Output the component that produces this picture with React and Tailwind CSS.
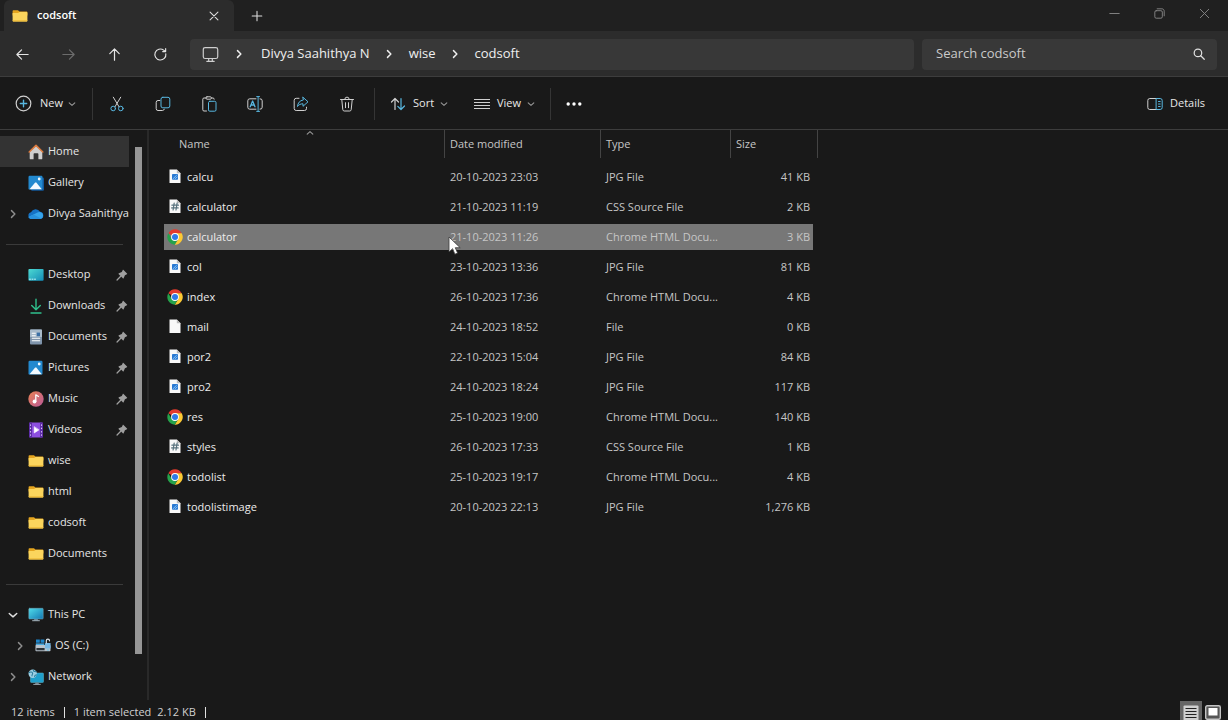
import React from "react";

const BLUE = "#58b7e0";
const GREY = "#d0d0d0";

function Svg({ size = 16, children, className = "", box = "0 0 16 16" }) {
  return (
    <svg
      width={size}
      height={size}
      viewBox={box}
      fill="none"
      stroke="currentColor"
      strokeLinecap="round"
      strokeLinejoin="round"
      aria-hidden="true"
      className={`shrink-0 ${className}`}
    >
      {children}
    </svg>
  );
}

/* ---------- file and folder icons ---------- */

function FolderIcon() {
  return (
    <Svg>
      <path d="M.6 3.2c0-.6.4-1 1-1h3.700c.4 0 .7.1 1 .4l1 1H14.400c.6 0 1 .4 1 1v3H.6z" fill="#e5a51f" stroke="none" />
      <path d="M.6 5h5.200c.5 0 .8-.2 1.100-.5l.6-.6h6.900c.6 0 1 .4 1 1v7.600c0 .6-.4 1-1 1H1.600c-.6 0-1-.4-1-1z" fill="#fbd55d" stroke="none" />
      <path d="M.6 12.200v.3c0 .6.4 1 1 1h12.800c.6 0 1-.4 1-1v-.3z" fill="#eebb3a" stroke="none" />
    </Svg>
  );
}

function HomeIcon() {
  return (
    <Svg>
      <path d="M1.700 7.500 8 1.600l6.300 5.900v6.900c0 .5-.4.900-.9.900h-3V10c0-.5-.3-.8-.8-.8H6.400c-.5 0-.8.3-.8.8v5.300h-3c-.5 0-.9-.4-.9-.9z" fill="#cfcfcf" stroke="none" />
      <path d="M1.200 8 8 1.400 14.800 8" stroke="#dc7a3e" strokeWidth="1.600" />
    </Svg>
  );
}

function PictureIcon({ gallery = false }) {
  return (
    <Svg>
      {gallery && <rect x="3" y="2.500" width="13" height="13.200" rx="1.200" fill="#12589b" stroke="none" />}
      <rect x=".5" y=".8" width="14" height="13.800" rx="1.200" fill="#2389cf" stroke="none" />
      <path d="M1.500 14.200 7.200 7.600c.3-.3.8-.3 1.100 0l5.500 6.600z" fill="#f3faff" stroke="none" />
      <circle cx="11.200" cy="4" r="1.400" fill="#f3faff" stroke="none" />
    </Svg>
  );
}

function CloudIcon() {
  return (
    <Svg>
      <path d="M3.600 13A3.400 3.400 0 0 1 3 6.300 5 5 0 0 1 12 5.700 3.700 3.700 0 0 1 12.400 13z" fill="#1672c4" stroke="none" />
      <path d="M3.600 13c-1.500 0-2.600-.8-3.100-1.900L9 6.800c1-.6 2.200-.9 3.500-.6A3.500 3.500 0 0 1 12.400 13z" fill="#36a4ea" stroke="none" />
      <path d="m5.600 8.400 7.900 4.400c-.4.200-.7.200-1.100.2H3.600c-1.500 0-2.600-.8-3.100-1.900z" fill="#2890dc" stroke="none" />
    </Svg>
  );
}

function DesktopIcon() {
  return (
    <Svg>
      <defs>
        <linearGradient id="desk" x1="0" y1="0" x2="1" y2="1">
          <stop offset="0" stopColor="#4ddad2" />
          <stop offset="1" stopColor="#138bb7" />
        </linearGradient>
      </defs>
      <rect x=".4" y="2" width="15.200" height="11.800" rx="1" fill="url(#desk)" stroke="none" />
      <path d="M1.500 12.200h1M4 12.200h1M6.500 12.200h1" stroke="#d7ffff" strokeWidth=".9" />
    </Svg>
  );
}

function DownloadIcon() {
  return (
    <Svg className="text-[#2fc08d]">
      <path d="M8 1.200v10.300M3.700 7.500 8 11.700l4.300-4.200M3 15h10" strokeWidth="1.400" />
    </Svg>
  );
}

function DocumentIcon() {
  return (
    <Svg>
      <rect x="2" y=".6" width="12" height="15" rx="1" fill="#7f94ab" stroke="none" />
      <path d="M2 1.600c0-.6.4-1 1-1h10c.6 0 1 .4 1 1V8H2z" fill="#a9bbcb" stroke="none" />
      <path d="M4.300 4.200h3M4.300 6.700h3M4.300 9.200h7.400M4.300 11.700h7.400" stroke="#fff" strokeWidth="1.100" />
      <rect x="8.800" y="3.600" width="3.200" height="3.600" fill="#3b6fa5" stroke="none" />
    </Svg>
  );
}

function MusicIcon() {
  return (
    <Svg>
      <defs>
        <linearGradient id="mus" x1="0" y1="0" x2="1" y2="1">
          <stop offset="0" stopColor="#ea8152" />
          <stop offset="1" stopColor="#b95a99" />
        </linearGradient>
      </defs>
      <circle cx="8" cy="8" r="7.700" fill="url(#mus)" stroke="none" />
      <circle cx="6.500" cy="10.500" r="1.900" fill="#fff" stroke="none" />
      <path d="M7.800 10.500V3.800l2.700 1.700" stroke="#fff" strokeWidth="1.300" />
    </Svg>
  );
}

function VideoIcon() {
  return (
    <Svg>
      <rect x="1" y=".5" width="14" height="15" rx="1.300" fill="#8d4fe0" stroke="none" />
      <path d="M1 1.800C1 1 1.600.5 2.300.5H4v15H2.300C1.600 15.500 1 15 1 14.200zM12 .5h1.700c.8 0 1.300.5 1.300 1.300v12.400c0 .8-.5 1.300-1.300 1.300H12z" fill="#5c2ba5" stroke="none" />
      <path d="M2.500 2.900v.4M2.500 6.200v.4M2.500 9.500v.4M2.500 12.800v.4M13.500 2.900v.4M13.500 6.200v.4M13.500 9.500v.4M13.500 12.800v.4" stroke="#d9c3fa" strokeWidth="1.200" />
      <path d="M6.200 5v6l4.600-3z" fill="#fff" stroke="#fff" strokeWidth=".6" />
    </Svg>
  );
}

function MonitorIcon() {
  return (
    <Svg>
      <defs>
        <linearGradient id="mon" x1="0" y1="0" x2="1" y2="1">
          <stop offset="0" stopColor="#4fdcea" />
          <stop offset="1" stopColor="#1478b2" />
        </linearGradient>
      </defs>
      <path d="M6.500 11h3l.6 2.500H5.900z" fill="#6d8391" stroke="none" />
      <rect x=".8" y="1.300" width="14.400" height="10.700" rx=".8" fill="url(#mon)" stroke="#75a9bd" strokeWidth=".5" />
      <path d="M4.600 13.700h6.800" stroke="#a6b4bd" strokeWidth="1" />
    </Svg>
  );
}

function DriveIcon() {
  return (
    <Svg>
      <path d="M1 1.500h3.800v3.300H1zM5.600 1.500h3.800v3.300H5.600z" fill="#1d84c9" stroke="none" />
      <path d="M.8 5.400h8.600v2H.8z" fill="#4aa9df" stroke="none" />
      <rect x=".5" y="7" width="15" height="6.300" rx=".7" fill="#b9c3cc" stroke="none" />
      <rect x="1.400" y="10" width="8.200" height="2.300" fill="#2b3238" stroke="none" />
      <rect x="10" y="5" width="5.600" height="5.600" rx=".6" fill="#78b8e4" stroke="none" />
      <path d="M11.300 5V2.800c0-2.200 3.200-2.200 3.200 0" stroke="#dfe6eb" strokeWidth="1.200" />
      <circle cx="13" cy="12" r=".7" fill="#40c8f2" stroke="none" />
    </Svg>
  );
}

function NetworkIcon() {
  return (
    <Svg>
      <rect x="2.500" y="4" width="13" height="9.500" rx=".8" fill="#20a0cc" stroke="#5eb9d1" strokeWidth=".5" />
      <path d="M7.500 13.500h3l.5 1.700H7z" fill="#71858f" stroke="none" />
      <path d="M5.700 15.400h6.600" stroke="#a6b4bd" strokeWidth=".9" />
      <circle cx="4.700" cy="4.700" r="4.200" fill="#9ed0e4" stroke="none" />
      <path d="M1.200 3.400c1.600-.8 3-.4 3.400.8.300 1-1 1.500-.6 2.700M5.400 1c-.2 1.400 1 1.600 2.700 1.700M6.600 7.500c0-1 .6-1.500 1.800-1.600" stroke="#2d7f9f" strokeWidth="1.100" />
    </Svg>
  );
}

function PinIcon() {
  return (
    <Svg size={12} className="text-[#9f9f9f]">
      <path d="M10 1.300 14.700 6c.4.400.3.900-.2 1.100l-2.600 1.200-1.700 3.900c-.2.500-.8.600-1.100.2L3.600 6.900c-.4-.4-.3-.9.200-1.100l3.900-1.700L8.900 1.500c.2-.5.700-.6 1.100-.2z" fill="currentColor" stroke="none" />
      <path d="M6 10 1.400 14.600" strokeWidth="1.700" />
    </Svg>
  );
}

function PageShape() {
  return (
    <>
      <path d="M2.500.500h7.300L13.500 4.200V14h-11z" fill="#f8f8f8" stroke="none" />
      <path d="M9.800.500v3.700h3.700z" fill="#b9b9b9" stroke="none" />
    </>
  );
}

function JpgIcon() {
  return (
    <Svg>
      <PageShape />
      <rect x="5" y="5" width="6" height="5.800" rx=".8" fill="#2a79d2" stroke="none" />
      <path d="m6 9.800 3.500-3.400M8.200 9.600l2-1.600" stroke="#8bc8fa" strokeWidth=".9" />
    </Svg>
  );
}

function CssIcon() {
  return (
    <Svg>
      <PageShape />
      <path d="m7.200 4-1.100 7M10.100 4 9 11M4.900 6.200h6.600M4.600 8.900h6.600" stroke="#58727d" strokeWidth="1.200" />
    </Svg>
  );
}

function BlankIcon() {
  return (
    <Svg>
      <PageShape />
    </Svg>
  );
}

function ChromeIcon() {
  return (
    <Svg>
      <path d="M8 8 1.330 4.150A7.700 7.700 0 0 1 14.670 4.150L14.670 4.400H8z" fill="#e33b2e" stroke="none" />
      <path d="M8 4.200h6.700A7.700 7.700 0 0 1 7.700 15.700L11.300 9.900z" fill="#fcc934" stroke="none" />
      <path d="M1.330 4.150A7.700 7.700 0 0 0 7.700 15.700l3.500-5.900-6.400.2z" fill="#25a24b" stroke="none" />
      <circle cx="8" cy="8" r="3.900" fill="#fff" stroke="none" />
      <circle cx="8" cy="8" r="3" fill="#2f7be8" stroke="none" />
    </Svg>
  );
}

function Chevron({ dir = "right", className = "" }) {
  const paths = {
    right: "M6 3.500 10.500 8 6 12.500",
    down: "M3 6l5 4.500L13 6",
    up: "M3 10l5-4.500 5 4.500",
  };
  return (
    <Svg size={12} className={className}>
      <path d={paths[dir]} strokeWidth="1.900" />
    </Svg>
  );
}

/* ---------- title bar ---------- */

function TitleBar() {
  return (
    <header className="flex h-[31px] shrink-0 items-stretch bg-[#202020] pl-1">
      <div className="flex w-[230px] items-center rounded-t-md bg-[#2c2c2c] pl-2">
        <FolderIcon />
        <span className="ml-[9px] flex-1 text-[11px] font-semibold text-white">codsoft</span>
        <button type="button" aria-label="Close tab" className="mr-[13px] text-[#dedede]">
          <Svg size={14}>
            <path d="m3.500 3.500 9 9M12.500 3.500l-9 9" strokeWidth="1.200" />
          </Svg>
        </button>
      </div>
      <button type="button" aria-label="New tab" className="ml-[16px] text-[#dedede]">
        <Svg size={14}>
          <path d="M8 2.500v11M2.500 8h11" strokeWidth="1.200" />
        </Svg>
      </button>
      <div className="ml-auto flex items-center gap-[30px] pr-4 pb-1 text-[#858585]">
        <button type="button" aria-label="Minimise">
          <Svg size={15}>
            <path d="M3 8h10" />
          </Svg>
        </button>
        <button type="button" aria-label="Restore">
          <Svg size={15}>
            <rect x="3" y="5" width="8" height="8" rx="1.500" />
            <path d="M5.500 3h5C12 3 13 4 13 5.500v5" />
          </Svg>
        </button>
        <button type="button" aria-label="Close window">
          <Svg size={15}>
            <path d="m3.500 3.500 9 9M12.500 3.500l-9 9" />
          </Svg>
        </button>
      </div>
    </header>
  );
}

/* ---------- navigation bar ---------- */

function NavBar() {
  return (
    <div className="flex h-[46px] shrink-0 items-center border-b border-[#3d3d3d] bg-[#2c2c2c] pt-px pr-[11px] pl-[15px]">
      <div className="flex w-[175px] shrink-0 gap-[31px] text-[#e4e4e4]">
        <button type="button" aria-label="Back">
          <Svg size={15}>
            <path d="M14 8H2M7 3 2 8l5 5" strokeWidth="1.300" />
          </Svg>
        </button>
        <button type="button" aria-label="Forward" className="text-[#6c6c6c]">
          <Svg size={15}>
            <path d="M2 8h12M9 3l5 5-5 5" strokeWidth="1.300" />
          </Svg>
        </button>
        <button type="button" aria-label="Up">
          <Svg size={15}>
            <path d="M8 14V2M3 7l5-5 5 5" strokeWidth="1.300" />
          </Svg>
        </button>
        <button type="button" aria-label="Refresh">
          <Svg size={15}>
            <path d="M13.700 7.200A5.900 5.900 0 1 1 11.400 3.300l1.800 1.500M13.500 1.700v3.200h-3.200" strokeWidth="1.200" />
          </Svg>
        </button>
      </div>
      <nav aria-label="Address" className="flex h-[31px] flex-1 items-center rounded bg-[#383838] pl-[12px] text-[13px] text-[#efefef]">
        <Svg size={17} className="text-[#cfcfcf]">
          <rect x="1.200" y="1.500" width="13.600" height="10.300" rx="1.800" strokeWidth="1.100" />
          <path d="M6.300 12v2.300M9.700 12v2.300M4.500 14.400h7" strokeWidth="1.100" />
        </Svg>
        <Chevron className="ml-[14px]" />
        <button type="button" className="ml-[16px]">Divya Saahithya N</button>
        <Chevron className="ml-[13px]" />
        <button type="button" className="ml-[14px]">wise</button>
        <Chevron className="ml-[13px]" />
        <button type="button" className="ml-[14px]">codsoft</button>
      </nav>
      <div className="ml-[8px] flex h-[31px] w-[295px] items-center rounded bg-[#383838] pr-[11px] pl-[14px]">
        <input
          type="text"
          aria-label="Search codsoft"
          placeholder="Search codsoft"
          className="min-w-0 flex-1 bg-transparent text-[13px] text-white outline-none placeholder:text-[#cacaca]"
        />
        <Svg size={14} className="text-[#e0e0e0]">
          <circle cx="6.800" cy="6.800" r="4.300" strokeWidth="1.400" />
          <path d="m10 10 4 4" strokeWidth="1.400" />
        </Svg>
      </div>
    </div>
  );
}

/* ---------- command bar ---------- */

function Divider() {
  return <span className="h-[32px] w-px shrink-0 bg-[#353535]" />;
}

const COMMANDS = [
  {
    label: "Cut",
    icon: (
      <>
        <path d="M4.300 1.200 10 10.700M11.700 1.200 6 10.700" stroke={GREY} />
        <circle cx="4.200" cy="12.500" r="2.300" stroke={BLUE} />
        <circle cx="11.800" cy="12.500" r="2.300" stroke={BLUE} />
      </>
    ),
  },
  {
    label: "Copy",
    icon: (
      <>
        <path d="M4.800 4.500H3A1.800 1.800 0 0 0 1.200 6.300v6.400A1.800 1.800 0 0 0 3 14.500h4.600a1.800 1.800 0 0 0 1.700-1.300" stroke={GREY} />
        <rect x="6" y="1.300" width="8.800" height="10.500" rx="1.800" stroke={BLUE} />
      </>
    ),
  },
  {
    label: "Paste",
    icon: (
      <>
        <path d="M5 2H3a1.200 1.200 0 0 0-1.200 1.200v10.600A1.200 1.200 0 0 0 3 15h2.500M10.500 2H12a1.200 1.200 0 0 1 1.200 1.200" stroke={GREY} />
        <rect x="5" y=".8" width="5.300" height="2.400" rx="1" stroke={GREY} />
        <rect x="7.500" y="5.300" width="7.500" height="9.900" rx="1.300" stroke={BLUE} />
      </>
    ),
  },
  {
    label: "Rename",
    icon: (
      <>
        <path d="M9 2.800H2.800A2 2 0 0 0 .8 4.800v6.400a2 2 0 0 0 2 2H9M13 2.800a2 2 0 0 1 2.200 2v6.400a2 2 0 0 1-2.200 2" stroke={GREY} />
        <path d="M11.100.8v14.400M9.700.6h2.800M9.700 15.400h2.800" stroke={BLUE} />
        <path d="M3.200 10.800 5.600 5l2.400 5.800M4.100 9h3" stroke={BLUE} strokeWidth="1.300" />
      </>
    ),
  },
  {
    label: "Share",
    icon: (
      <>
        <path d="M6 2.300H3.200a2 2 0 0 0-2 2v8.200a2 2 0 0 0 2 2h8.300a2 2 0 0 0 2-2v-1.300" stroke={GREY} />
        <path d="M10 1.300 15 5.800l-5 4.500V7.800c-2.400 0-4.200.8-5.500 2.700.3-3.500 2.200-6 5.500-6.500z" stroke={BLUE} />
      </>
    ),
  },
  {
    label: "Delete",
    icon: (
      <>
        <path d="M1.500 3.500h13M5.800 3.300a2.200 2.200 0 0 1 4.400 0M2.800 3.700l1 10c.1.800.7 1.300 1.400 1.300h5.600c.7 0 1.300-.5 1.400-1.300l1-10M6.500 6.700v5M9.500 6.700v5" stroke={GREY} />
      </>
    ),
  },
];

function CommandBar() {
  return (
    <div className="flex h-[53px] shrink-0 items-center border-b border-[#3d3d3d] bg-[#191919] pt-px pr-[23px] pl-[15px] text-[11px] font-medium text-[#e8e8e8]">
      <button type="button" className="flex w-[77px] items-center">
        <Svg size={17}>
          <circle cx="8" cy="8" r="6.900" stroke={GREY} strokeWidth="1.100" />
          <path d="M8 5v6M5 8h6" stroke={BLUE} strokeWidth="1.300" />
        </Svg>
        <span className="ml-[8px]">New</span>
        <Chevron dir="down" className="ml-[3px] scale-75 text-[#999]" />
      </button>
      <Divider />
      <div className="flex w-[281px] gap-[30px] pl-[16px]">
        {COMMANDS.map((c) => (
          <button key={c.label} type="button" aria-label={c.label}>
            <Svg>{c.icon}</Svg>
          </button>
        ))}
      </div>
      <Divider />
      <button type="button" className="ml-[15px] flex w-[84px] items-center">
        <Svg>
          <path d="M5 13.500v-11M1.500 6 5 2.500 8.500 6" stroke={GREY} strokeWidth="1.200" />
          <path d="M11 2.500v11M7.800 10.300 11 13.500l3.500-3.500" stroke={BLUE} strokeWidth="1.200" />
        </Svg>
        <span className="ml-[7px]">Sort</span>
        <Chevron dir="down" className="ml-[4px] scale-75 text-[#999]" />
      </button>
      <button type="button" className="flex w-[76px] items-center">
        <Svg>
          <path d="M0 3.500h16M0 6.500h16M0 9.500h16M0 12.500h16" stroke={GREY} strokeLinecap="butt" />
        </Svg>
        <span className="ml-[7px]">View</span>
        <Chevron dir="down" className="ml-[4px] scale-75 text-[#999]" />
      </button>
      <Divider />
      <button type="button" aria-label="See more" className="ml-[15px]">
        <Svg>
          <circle cx="2.200" cy="8" r="1.700" fill="#fff" stroke="none" />
          <circle cx="8" cy="8" r="1.700" fill="#fff" stroke="none" />
          <circle cx="13.800" cy="8" r="1.700" fill="#fff" stroke="none" />
        </Svg>
      </button>
      <button type="button" className="ml-auto flex items-center gap-[7px]">
        <Svg>
          <path d="M9.500 2.500H2.800a2 2 0 0 0-2 2v7a2 2 0 0 0 2 2h6.700" stroke={GREY} />
          <path d="M9.500 2.500h3.700a2 2 0 0 1 2 2v7a2 2 0 0 1-2 2H9.500zM11.500 5.500h1.700M11.500 8h1.700M11.500 10.500h1.700" stroke={BLUE} />
        </Svg>
        Details
      </button>
    </div>
  );
}

/* ---------- sidebar ---------- */

const PLACES = [
  { name: "Home", icon: <HomeIcon />, active: true },
  { name: "Gallery", icon: <PictureIcon gallery /> },
  { name: "Divya Saahithya", icon: <CloudIcon />, chevron: "right" },
];

const QUICK = [
  { name: "Desktop", icon: <DesktopIcon />, pinned: true },
  { name: "Downloads", icon: <DownloadIcon />, pinned: true },
  { name: "Documents", icon: <DocumentIcon />, pinned: true },
  { name: "Pictures", icon: <PictureIcon />, pinned: true },
  { name: "Music", icon: <MusicIcon />, pinned: true },
  { name: "Videos", icon: <VideoIcon />, pinned: true },
  { name: "wise", icon: <FolderIcon /> },
  { name: "html", icon: <FolderIcon /> },
  { name: "codsoft", icon: <FolderIcon /> },
  { name: "Documents", icon: <FolderIcon /> },
];

const DEVICES = [
  { name: "This PC", icon: <MonitorIcon />, chevron: "down" },
  { name: "OS (C:)", icon: <DriveIcon />, chevron: "right", nested: true },
  { name: "Network", icon: <NetworkIcon />, chevron: "right" },
];

function SideGroup({ items }) {
  return (
    <ul>
      {items.map((item, i) => (
        <li key={i}>
          <a
            href="#"
            className={`flex h-[31px] items-center pr-px whitespace-nowrap ${item.nested ? "pl-[14px]" : "pl-[7px]"} ${item.active ? "bg-[#333333]" : ""}`}
          >
            <span className="flex w-[21px] shrink-0">
              {item.chevron && (
                <Chevron dir={item.chevron} className={item.chevron === "down" ? "text-[#e0e0e0]" : "text-[#8d8d8d]"} />
              )}
            </span>
            <span className="flex w-[20px] shrink-0 items-center">{item.icon}</span>
            <span className="flex-1">{item.name}</span>
            {item.pinned && <PinIcon />}
          </a>
        </li>
      ))}
    </ul>
  );
}

function SideRule() {
  return (
    <div className="flex h-[30px] items-center pr-[6px] pl-[6px]">
      <span className="h-px flex-1 bg-[#3a3a3a]" />
    </div>
  );
}

function Sidebar() {
  return (
    <aside className="flex w-[149px] shrink-0 border-r-2 border-[#292929] text-[11px] text-[#e6e6e6]">
      <nav aria-label="Folders" className="w-[129px] shrink-0 pt-[6px]">
        <SideGroup items={PLACES} />
        <SideRule />
        <SideGroup items={QUICK} />
        <SideRule />
        <SideGroup items={DEVICES} />
      </nav>
      <div className="flex flex-1 pt-[17px] pr-[5px] pb-[46px] pl-[6px]">
        <span className="flex-1 bg-[#969696]" />
      </div>
    </aside>
  );
}

/* ---------- file list ---------- */

const ICONS = { jpg: JpgIcon, css: CssIcon, chrome: ChromeIcon, file: BlankIcon };
const KINDS = { jpg: "JPG File", css: "CSS Source File", chrome: "Chrome HTML Docu...", file: "File" };

const FILES = [
  ["calcu", "20-10-2023 23:03", "jpg", "41 KB"],
  ["calculator", "21-10-2023 11:19", "css", "2 KB"],
  ["calculator", "21-10-2023 11:26", "chrome", "3 KB"],
  ["col", "23-10-2023 13:36", "jpg", "81 KB"],
  ["index", "26-10-2023 17:36", "chrome", "4 KB"],
  ["mail", "24-10-2023 18:52", "file", "0 KB"],
  ["por2", "22-10-2023 15:04", "jpg", "84 KB"],
  ["pro2", "24-10-2023 18:24", "jpg", "117 KB"],
  ["res", "25-10-2023 19:00", "chrome", "140 KB"],
  ["styles", "26-10-2023 17:33", "css", "1 KB"],
  ["todolist", "25-10-2023 19:17", "chrome", "4 KB"],
  ["todolistimage", "20-10-2023 22:13", "jpg", "1,276 KB"],
];
const SELECTED = 2;

function Pointer() {
  return (
    <svg width="14" height="20" viewBox="0 0 14 20" aria-hidden="true" className="absolute top-[12px] left-[3px]">
      <path d="M1 1v15l3.600-3.300 2.300 5.500 2.700-1.100-2.300-5.400h4.900z" fill="#fff" stroke="#3a3a3a" strokeWidth=".8" />
    </svg>
  );
}

function HeadCell({ children, className = "" }) {
  return (
    <th scope="col" className="p-0 text-left align-top font-normal">
      <div className={`flex h-[28px] items-center border-r border-[#444] ${className}`}>{children}</div>
    </th>
  );
}

function FileList() {
  return (
    <main className="min-w-0 flex-1 pl-[15px] text-[11px]">
      <table className="w-[654px] table-fixed border-collapse text-[#c6c6c6]">
        <colgroup>
          <col className="w-[281px]" />
          <col className="w-[156px]" />
          <col className="w-[130px]" />
          <col className="w-[87px]" />
        </colgroup>
        <thead>
          <tr className="h-[32px]">
            <HeadCell className="relative pl-[15px]">
              Name
              <Chevron dir="up" className="absolute -top-[3px] left-1/2 scale-75 text-[#999]" />
            </HeadCell>
            <HeadCell className="pl-[5px]">Date modified</HeadCell>
            <HeadCell className="pl-[5px]">Type</HeadCell>
            <HeadCell className="pl-[5px]">Size</HeadCell>
          </tr>
        </thead>
        <tbody>
          {FILES.map(([name, date, kind, size], i) => {
            const Icon = ICONS[kind];
            const bg = i === SELECTED ? "bg-[#777777]" : "";
            return (
              <tr key={i} aria-selected={i === SELECTED}>
                <td className="p-0 py-[2px]">
                  <div className={`flex h-[26px] items-center gap-[4px] pl-[3px] text-[#ececec] ${bg}`}>
                    <Icon />
                    {name}
                  </div>
                </td>
                <td className="p-0 py-[2px]">
                  <div className={`relative flex h-[26px] items-center pl-[5px] ${bg}`}>
                    {date}
                    {i === SELECTED && <Pointer />}
                  </div>
                </td>
                <td className="p-0 py-[2px]">
                  <div className={`flex h-[26px] items-center pl-[5px] whitespace-nowrap ${bg}`}>{KINDS[kind]}</div>
                </td>
                <td className="p-0 py-[2px] pr-[5px]">
                  <div className={`flex h-[26px] items-center justify-end pr-[3px] ${bg}`}>{size}</div>
                </td>
              </tr>
            );
          })}
        </tbody>
      </table>
    </main>
  );
}

/* ---------- status bar ---------- */

function StatusBar() {
  return (
    <footer className="flex h-[20px] shrink-0 items-end bg-[#191919] pr-[7px] pl-[11px] text-[11px] text-[#d0d0d0]">
      <div className="flex h-[16px] items-center">
        <span>12 items</span>
        <span className="mx-[9px] h-[11px] w-px bg-[#e0e0e0]" />
        <span>1 item selected</span>
        <span className="ml-[6px]">2.12 KB</span>
        <span className="ml-[9px] h-[11px] w-px bg-[#e0e0e0]" />
      </div>
      <div className="ml-auto flex h-[19px] items-end gap-[2px]">
        <button type="button" aria-label="Details view" className="flex h-[19px] w-[22px] items-end justify-center bg-[#666]">
          <svg width="16" height="15" viewBox="0 0 16 15" aria-hidden="true">
            <rect x=".5" y=".5" width="15" height="16" rx="1" fill="#cfcfcf" />
            <path d="M2.500 3.500h11M2.500 6.500h11M2.500 9.500h11M2.500 12.500h11" stroke="#222" strokeWidth="1.200" />
          </svg>
        </button>
        <button type="button" aria-label="Large icons view" className="flex h-[19px] w-[17px] items-end justify-center">
          <svg width="16" height="15" viewBox="0 0 16 15" aria-hidden="true">
            <rect x=".7" y=".7" width="14.600" height="13.600" rx="1.500" fill="#555" stroke="#c4c4c4" strokeWidth="1.400" />
            <rect x="3.500" y="3" width="9" height="7.500" fill="#fff" />
          </svg>
        </button>
      </div>
    </footer>
  );
}

export default function App() {
  return (
    <div className="flex h-screen flex-col overflow-hidden bg-[#191919] font-['Open_Sans','Noto_Sans',sans-serif]">
      <TitleBar />
      <NavBar />
      <CommandBar />
      <div className="flex min-h-0 flex-1">
        <Sidebar />
        <FileList />
      </div>
      <StatusBar />
    </div>
  );
}
